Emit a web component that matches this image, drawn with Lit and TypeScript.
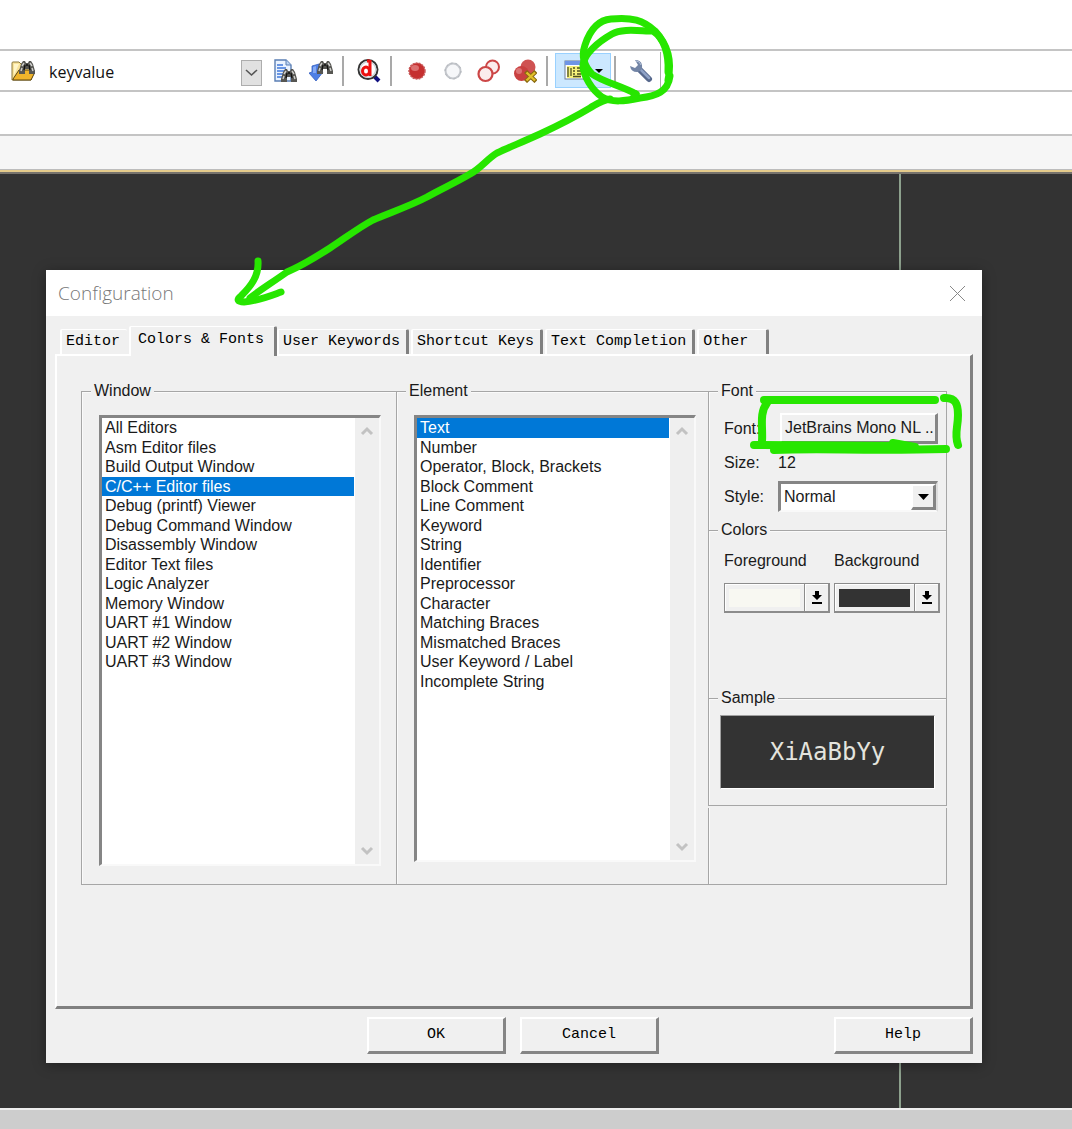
import { LitElement, html, svg, css } from "lit";
import { customElement, property, state } from "lit/decorators.js";
import { classMap } from "lit/directives/class-map.js";

const binoculars = svg`
  <path d="M0 11 L2 4 L4 1 H6 L7 3 H9 L10 1 H12 L14 4 L16 11 V14 H10 V9 H6 V14 H0 Z" fill="#565652"/>
  <path d="M3 6 L5 3 M11 3 L13 6 M2 11 L3 8 M13 8 L14 11" stroke="#cfcfcc" stroke-width="1.4" fill="none"/>
  <path d="M7 5 H9 M5 10 L6 5 M11 10 L10 5" stroke="#111" stroke-width="1.3" fill="none"/>`;

const icons = {
  folder: svg`
    <path d="M1 4 Q1 3 2 3 H8 L10 5 H20 V10 L23 11 L20 21 H1 Z" fill="#f9e39a" stroke="#8a7638"/>
    <path d="M2 20 L8 11 H23 V15 L20 21 H2 Z" fill="#efb42c" stroke="#5a4410"/>
    <path d="M3 5 H8 L3 16 Z" fill="#fff5c8"/>
    <g transform="translate(8 1)">${binoculars}</g>`,
  findFile: svg`
    <path d="M2 1 H13 L18 6 V22 H2 Z" fill="#eaf3ff" stroke="#5b7fb4" stroke-width="1.4"/>
    <path d="M13 1 V6 H18" fill="#bcd4f2" stroke="#5b7fb4"/>
    <path d="M4 6 H10 M4 9 H13 M4 12 H14 M4 15 H11 M4 18 H9" stroke="#3f78dc" stroke-width="1.4"/>
    <g transform="translate(8 9)">${binoculars}</g>`,
  findNext: svg`
    <path d="M3 7 L10 5 V13 H14 L7 22 L0 14 L3 13 Z" fill="#4f80e6" stroke="#3560c0" stroke-width=".8"/>
    <path d="M4 8 L7 7 V14 H4 Z" fill="#85aaf5"/>
    <g transform="translate(8 1)">${binoculars}</g>`,
  debug: svg`
    <path d="M16 16 L22 22" stroke="#101080" stroke-width="4"/>
    <circle cx="11" cy="10.500" r="9.500" fill="#fff" stroke="#333" stroke-width="2"/>
    <circle cx="11" cy="10.500" r="7.800" fill="none" stroke="#cfd6dc" stroke-width="1.500"/>
    <ellipse cx="9" cy="12" rx="3.500" ry="4" fill="none" stroke="#ee1010" stroke-width="3"/>
    <path d="M13 1 V17 M10 2 H13" stroke="#ee1010" stroke-width="3"/>`,
  breakpoint: svg`
    <circle cx="12" cy="12" r="8" fill="#c52f2f" stroke="#c85a5a" stroke-width="1.500" stroke-dasharray="2 1"/>
    <ellipse cx="10" cy="9" rx="4" ry="3" fill="#dc7070"/>`,
  ring: svg`
    <circle cx="12" cy="12" r="7.500" fill="#f6f7f9" stroke="#c4c7cc" stroke-width="2"/>
    <circle cx="12" cy="12" r="8" fill="none" stroke="#b0b4ba" stroke-dasharray="2 3"/>`,
  rings: svg`
    <circle cx="15.500" cy="8" r="6.500" fill="#fbecec" stroke="#cc4646" stroke-width="2"/>
    <circle cx="8.500" cy="15" r="7" fill="#fbecec" stroke="#cc4646" stroke-width="2.200"/>`,
  killAll: svg`
    <circle cx="15" cy="8" r="7.500" fill="#cf5252"/>
    <circle cx="8.500" cy="14.500" r="7.500" fill="#c94040"/>
    <ellipse cx="6" cy="12" rx="3" ry="3" fill="#dc7474"/>
    <path d="M12.500 12.500 L23 22.500 M23 12.500 L12.500 22.500" stroke="#8a6a10" stroke-width="4.400"/>
    <path d="M13.500 13.500 L22 21.500 M22 13.500 L13.500 21.500" stroke="#e2c02a" stroke-width="2.400"/>`,
  windowList: svg`
    <rect x="2" y="2" width="22" height="18" fill="#fff" stroke="#6e7c94"/>
    <rect x="2" y="2" width="22" height="4" fill="#6f95e6"/>
    <path d="M4 7 H18 V19 H4 Z" fill="#f7f27a"/>
    <path d="M5 8 V18 M8 9 V17 M10 9 H12 M14 9 H18 M10 12 H12 M14 12 H18 M10 15 H12 M14 15 H18 M10 17.500 H18" stroke="#4d4d20" stroke-width="1.300"/>`,
  wrench: svg`
    <path d="M10 10 L20 20" stroke="#56688c" stroke-width="6" stroke-linecap="round"/>
    <path d="M11 10 L20 19" stroke="#8fa2c6" stroke-width="2.500" stroke-linecap="round"/>
    <path d="M6 1 Q12 1 13 6 Q14 12 8 13 Q2 13 1 7 L6 9 L9 6 Z" fill="#7385a6"/>
    <path d="M7 2 Q11 2 12 6" stroke="#b4c2da" fill="none"/>`,
};

type IconName = keyof typeof icons;

@customElement("tool-icon")
export class ToolIcon extends LitElement {
  @property() name: IconName = "folder";

  static styles = css`
    :host { display: block; width: 24px; height: 24px; }
    svg { display: block; }
  `;

  render() {
    return html`<svg width="24" height="24" viewBox="0 0 24 24" aria-hidden="true">${icons[this.name]}</svg>`;
  }
}

@customElement("list-panel")
export class ListPanel extends LitElement {
  @property({ attribute: false }) items: string[] = [];
  @property() label = "";
  @property({ type: Number }) selected = 0;

  static styles = css`
    :host { display: block; }
    .box {
      display: grid;
      grid-template-columns: minmax(0, 1fr) 24px;
      height: 100%;
      box-sizing: border-box;
      background: #fff;
      border: 3px solid #858585;
      border-right: 2px solid #f9f9f9;
      border-bottom: 2px solid #f9f9f9;
    }
    .items {
      margin: 0;
      padding: 0 1px 0 0;
      list-style: none;
      display: grid;
      grid-auto-rows: 1fr;
      align-self: start;
    }
    .count-13 { height: 254px; }
    .count-14 { height: 273px; }
    .item {
      padding-left: 3px;
      line-height: 20px;
      min-height: 0;
      white-space: nowrap;
      cursor: default;
    }
    .item.on { background: #0078d7; color: #fff; }
    .scroll {
      background: #efefef;
      display: flex;
      flex-direction: column;
      justify-content: space-between;
      align-items: center;
      padding: 7px 0;
    }
    .arrow {
      border: 0;
      padding: 0;
      background: none;
      height: 12px;
      width: 14px;
    }
    .arrow svg { display: block; }
  `;

  render() {
    return html`<div class="box">
      <ul class="items count-${this.items.length}" role="listbox" aria-label=${this.label}>
        ${this.items.map(
          (t, i) => html`<li
            class=${classMap({ item: true, on: i === this.selected })}
            role="option"
            aria-selected=${i === this.selected}
            @click=${() => (this.selected = i)}
          >${t}</li>`
        )}
      </ul>
      <div class="scroll">
        <button class="arrow" aria-label="Scroll up">
          <svg width="14" height="12"><path d="M2 9 L7 4 L12 9" fill="none" stroke="#c2c2c2" stroke-width="3"/></svg>
        </button>
        <button class="arrow" aria-label="Scroll down">
          <svg width="14" height="12"><path d="M2 3 L7 8 L12 3" fill="none" stroke="#c2c2c2" stroke-width="3"/></svg>
        </button>
      </div>
    </div>`;
  }
}

const windows = [
  "All Editors", "Asm Editor files", "Build Output Window", "C/C++ Editor files",
  "Debug (printf) Viewer", "Debug Command Window", "Disassembly Window", "Editor Text files",
  "Logic Analyzer", "Memory Window", "UART #1 Window", "UART #2 Window", "UART #3 Window",
];

const elements = [
  "Text", "Number", "Operator, Block, Brackets", "Block Comment", "Line Comment", "Keyword",
  "String", "Identifier", "Preprocessor", "Character", "Matching Braces", "Mismatched Braces",
  "User Keyword / Label", "Incomplete String",
];

const tabs = ["Editor", "Colors & Fonts", "User Keywords", "Shortcut Keys", "Text Completion", "Other"];

@customElement("config-dialog")
export class ConfigDialog extends LitElement {
  @state() private tab = 1;

  static styles = css`
    :host {
      display: block;
      background: #f0f0f0;
      box-shadow: 0 2px 12px rgba(0, 0, 0, 0.35);
      font: 16px/20px "Liberation Sans", Arial, sans-serif;
      color: #1a1a1a;
    }
    .title {
      height: 46px;
      box-sizing: border-box;
      padding: 0 16px 0 12px;
      background: #fff;
      display: flex;
      align-items: center;
      justify-content: space-between;
    }
    .title h1 {
      margin: 0;
      font: 19px/24px "Open Sans", "Noto Sans", sans-serif;
      font-weight: 300;
      color: #777;
    }
    .close { border: 0; padding: 0; background: none; width: 17px; height: 17px; }
    .close svg { display: block; }
    .body { padding: 10px 9px 9px 9px; }
    .tabs {
      display: flex;
      align-items: flex-end;
      gap: 2px;
      padding-left: 5px;
    }
    .tab {
      height: 25px;
      box-sizing: border-box;
      padding: 0 6px 0 4px;
      border: 0 solid #fff;
      border-width: 1px 3px 0 2px;
      border-right-color: #808080;
      border-radius: 2px 2px 0 0;
      background: #f0f0f0;
      font: 15px/20px "Liberation Mono", monospace;
      color: #000;
      text-align: left;
      white-space: nowrap;
    }
    .tab:first-child { border-right-width: 0; padding-right: 7px; }
    .tab:last-child { min-width: 72px; }
    .tab.on {
      height: 30px;
      padding: 0 10px 4px 7px;
      margin: 0 -2px -2px 0;
      z-index: 1;
    }
    .page {
      border: 2px solid #fff;
      border-right: 3px solid #808080;
      border-bottom: 3px solid #808080;
      padding: 25px 23px 121px 24px;
    }
    .groups {
      display: grid;
      grid-template-columns: 315fr 312fr 239fr;
    }
    fieldset {
      margin: 0;
      padding: 0;
      min-width: 0;
      border: 1px solid #a6a6a6;
      box-shadow: inset 1px 1px #fafafa;
    }
    legend {
      margin-left: 9px;
      padding: 0 3px;
      background: #f0f0f0;
      line-height: 20px;
    }
    .window, .element { border-right: 0; }
    list-panel { margin: 14px 15px 18px 17px; height: 451px; }
    .element list-panel { margin-right: 12px; height: 447px; }
    .side { display: flex; flex-direction: column; }
    .side fieldset { box-sizing: border-box; margin-bottom: -10px; border-bottom: 0; }
    .font { height: 149px; }
    .colors { height: 178px; }
    .side .sample { height: 118px; margin-bottom: 2px; border-bottom: 1px solid #a6a6a6; }
    .rest { flex: 1; border: 1px solid #a6a6a6; border-top: 0; box-shadow: inset 1px 0 #fafafa; }
    .font-grid {
      display: grid;
      grid-template-columns: 54px minmax(0, 1fr);
      grid-template-rows: 31px 19px 31px;
      gap: 9px 0;
      align-items: center;
      padding: 12px 8px 0 15px;
    }
    .raised {
      box-sizing: border-box;
      background: #f0f0f0;
      border: 2px solid #fff;
      border-right: 3px solid #858585;
      border-bottom: 3px solid #858585;
      color: inherit;
    }
    .pick {
      height: 31px;
      margin-left: 2px;
      padding: 0 0 0 3px;
      font: inherit;
      text-align: left;
      white-space: nowrap;
      overflow: hidden;
    }
    .select {
      display: grid;
      grid-template-columns: minmax(0, 1fr) 25px;
      height: 31px;
      box-sizing: border-box;
      background: #fff;
      border: 3px solid #858585;
      border-right: 2px solid #ddd;
      border-bottom: 2px solid #f9f9f9;
    }
    select {
      grid-area: 1 / 1 / 2 / 3;
      appearance: none;
      border: 0;
      padding: 0 0 0 3px;
      background: none;
      font: inherit;
      color: inherit;
    }
    .drop {
      grid-area: 1 / 2;
      display: grid;
      place-items: center;
      pointer-events: none;
    }
    .color-grid {
      display: grid;
      grid-template-columns: 1fr 1fr;
      gap: 12px 4px;
      padding: 11px 6px 0 15px;
    }
    .swatch {
      height: 30px;
      box-sizing: border-box;
      display: grid;
      grid-template-columns: minmax(0, 1fr) 24px;
      padding: 0;
      background: #f0f0f0;
      border: 1px solid #8c8c8c;
      border-right-width: 2px;
      border-bottom-width: 2px;
      box-shadow: inset 1px 1px #fff;
    }
    .chip { margin: 5px 4px 4px 4px; }
    .fore { background: #f8f8f2; }
    .back { background: #333; }
    .down {
      display: grid;
      place-items: center;
      border-left: 1px solid #8c8c8c;
      box-shadow: inset 1px 1px #fff;
    }
    .preview {
      display: grid;
      place-items: center;
      height: 74px;
      box-sizing: border-box;
      margin: 7px 11px 0 11px;
      background: #333;
      border: 1px solid #a0a0a0;
      border-right-color: #fff;
      border-bottom-color: #fff;
      font: 24px/32px "DejaVu Sans Mono", monospace;
      color: #e4e4de;
    }
    .actions {
      display: flex;
      justify-content: flex-end;
      gap: 14px;
      padding-top: 8px;
    }
    .action {
      width: 139px;
      height: 37px;
      padding: 0;
      font: 15px/20px "Liberation Mono", monospace;
      color: #000;
    }
    .help { margin-left: 161px; }
  `;

  private downGlyph() {
    return html`<svg width="12" height="15" aria-hidden="true">
      <path d="M4 1 H8 V5 H11 L6 10 L1 5 H4 Z M1 12 H11 V14 H1 Z" fill="#000" />
    </svg>`;
  }

  render() {
    return html`
      <header class="title">
        <h1>Configuration</h1>
        <button class="close" aria-label="Close">
          <svg width="17" height="17"><path d="M1 1 L16 16 M16 1 L1 16" stroke="#888" stroke-width="1"/></svg>
        </button>
      </header>
      <div class="body">
        <div class="tabs" role="tablist">
          ${tabs.map(
            (t, i) => html`<button
              class=${classMap({ tab: true, on: i === this.tab })}
              role="tab"
              aria-selected=${i === this.tab}
              @click=${() => (this.tab = i)}
            >${t}</button>`
          )}
        </div>
        <div class="page" role="tabpanel">
          <div class="groups">
            <fieldset class="window">
              <legend>Window</legend>
              <list-panel label="Window" .items=${windows} .selected=${3}></list-panel>
            </fieldset>
            <fieldset class="element">
              <legend>Element</legend>
              <list-panel label="Element" .items=${elements} .selected=${0}></list-panel>
            </fieldset>
            <div class="side">
              <fieldset class="font">
                <legend>Font</legend>
                <div class="font-grid">
                  <label for="font">Font:</label>
                  <button id="font" class="raised pick">JetBrains Mono NL ..</button>
                  <span>Size:</span>
                  <span>12</span>
                  <label for="style">Style:</label>
                  <div class="select">
                    <select id="style"><option>Normal</option></select>
                    <span class="drop raised">
                      <svg width="11" height="6" aria-hidden="true"><path d="M0 0 H11 L5.500 6 Z"/></svg>
                    </span>
                  </div>
                </div>
              </fieldset>
              <fieldset class="colors">
                <legend>Colors</legend>
                <div class="color-grid">
                  <label for="fore">Foreground</label>
                  <label for="back">Background</label>
                  <button id="fore" class="swatch"><span class="chip fore"></span><span class="down">${this.downGlyph()}</span></button>
                  <button id="back" class="swatch"><span class="chip back"></span><span class="down">${this.downGlyph()}</span></button>
                </div>
              </fieldset>
              <fieldset class="sample">
                <legend>Sample</legend>
                <div class="preview">XiAaBbYy</div>
              </fieldset>
              <div class="rest"></div>
            </div>
          </div>
        </div>
        <footer class="actions">
          <button class="raised action">OK</button>
          <button class="raised action">Cancel</button>
          <button class="raised action help">Help</button>
        </footer>
      </div>
    `;
  }
}

@customElement("app-root")
export class AppRoot extends LitElement {
  static styles = css`
    :host {
      display: flex;
      flex-direction: column;
      position: relative;
      min-height: 100vh;
      background: #fff;
      overflow: hidden;
    }
    .toolbar {
      display: flex;
      align-items: center;
      height: 43px;
      box-sizing: border-box;
      margin-top: 49px;
      border-top: 2px solid #c4c4c4;
      border-bottom: 2px solid #c4c4c4;
      padding-left: 11px;
    }
    .tool {
      width: 36px;
      height: 35px;
      padding: 0;
      border: 0;
      background: none;
      display: grid;
      place-items: center;
      flex: none;
    }
    .open { width: 24px; }
    .search {
      width: 189px;
      box-sizing: border-box;
      border: 0;
      padding: 0;
      margin: 3px 3px 0 14px;
      background: none;
      font: 16px/24px "Open Sans", "Noto Sans", sans-serif;
      color: #111;
    }
    .combo {
      width: 21px;
      height: 26px;
      padding: 0;
      margin: 4px 5px 0 0;
      border: 1px solid #adadad;
      background: #e1e1e1;
      display: grid;
      place-items: center;
    }
    .sep { width: 2px; height: 30px; margin: 0 7px 0 3px; background: #a9a9a9; flex: none; }
    .wide {
      width: 56px;
      box-sizing: border-box;
      background: #cce8ff;
      border: 1px solid #99d1ff;
      display: flex;
      align-items: center;
      gap: 8px;
      padding-left: 7px;
    }
    .end { width: 1px; height: 38px; margin-left: 1px; background: #aaa; }
    .strip {
      height: 36px;
      box-sizing: border-box;
      margin-top: 42px;
      background: #f6f6f6;
      border-top: 2px solid #c4c4c4;
      border-bottom: 1px solid #bdbdbd;
    }
    .rim { height: 2px; background: #e5cb8b; border-bottom: 2px solid #77736c; }
    .editor {
      flex: 1;
      box-sizing: border-box;
      padding: 96px 90px 45px 46px;
      background: #333 linear-gradient(#8da18d, #8da18d) no-repeat 899px 0 / 2px 100%;
    }
    .status {
      height: 21px;
      box-sizing: border-box;
      background: #cdcdcd;
      border-top: 2px solid #eee;
    }
    .marks {
      position: absolute;
      left: 0;
      top: 0;
      pointer-events: none;
      fill: none;
      stroke: #27e600;
      stroke-width: 7px;
      stroke-linecap: round;
      stroke-linejoin: round;
    }
    .bold { stroke-width: 8px; }
  `;

  private tool(name: IconName, label: string) {
    return html`<button class="tool" aria-label=${label}><tool-icon .name=${name}></tool-icon></button>`;
  }

  render() {
    return html`
      <div class="toolbar" role="toolbar">
        <button class="tool open" aria-label="Find in files"><tool-icon .name=${"folder"}></tool-icon></button>
        <input class="search" aria-label="Search text" value="keyvalue" />
        <button class="combo" aria-label="Search history">
          <svg width="13" height="9"><path d="M1 2 L6.500 7 L12 2" fill="none" stroke="#555" stroke-width="1.600"/></svg>
        </button>
        ${this.tool("findFile", "Find in file")}
        ${this.tool("findNext", "Find next")}
        <span class="sep"></span>
        ${this.tool("debug", "Debug")}
        <span class="sep"></span>
        ${this.tool("breakpoint", "Insert breakpoint")}
        ${this.tool("ring", "Disable breakpoint")}
        ${this.tool("rings", "Disable all breakpoints")}
        ${this.tool("killAll", "Kill all breakpoints")}
        <span class="sep"></span>
        <button class="tool wide" aria-label="Windows">
          <tool-icon .name=${"windowList"}></tool-icon>
          <svg width="8" height="4"><path d="M0 0 H8 L4 4 Z"/></svg>
        </button>
        <span class="sep"></span>
        ${this.tool("wrench", "Configuration")}
        <span class="end"></span>
      </div>
      <div class="strip"></div>
      <div class="rim"></div>
      <main class="editor"><config-dialog></config-dialog></main>
      <div class="status"></div>
      <svg class="marks" width="1000" height="470" aria-hidden="true">
        <path d="M636 94 C622 86 603 82 592 74 C582 64 582 54 585 45 C590 30 598 20 611 19 C632 17 643 20 655 31 C668 45 672 62 668 80"/>
        <path d="M670 76 C668 92 656 96 640 98 C625 101 612 103 602 97 C592 90 583 76 583 65 C584 54 598 42 612 34 C622 28 640 31 653 31 C664 38 669 54 668 72"/>
        <path d="M636 94 L633 98"/>
        <path d="M610 99 C602 100 597 104 590 108 C570 120 555 127 540 134 C520 143 510 147 497 153 C487 159 480 169 470 174 C455 183 441 189 427 197 C410 206 389 213 373 220 C358 228 344 239 330 248 C316 257 301 266 287 272 C270 284 260 290 250 298"/>
        <path d="M258 261 C259 276 251 286 241 296 C236 300 238 302 244 302 C258 301 270 296 281 292"/>
        <g class="bold">
          <path d="M764 400 H935"/>
          <path d="M767 403 C759 413 763 427 762 441"/>
          <path d="M754 445 L896 446"/>
          <path d="M774 450 C820 448 865 451 946 449 M893 443 L915 447"/>
          <path d="M944 398 C956 397 958 405 958 415 C958 428 954 434 958 445"/>
        </g>
      </svg>
    `;
  }
}
